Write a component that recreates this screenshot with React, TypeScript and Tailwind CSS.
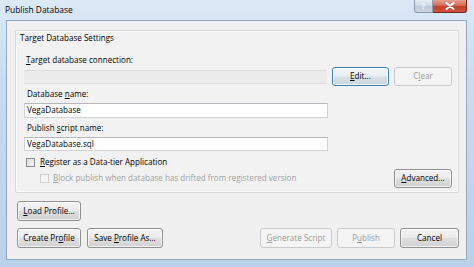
import React from "react";

const btn =
  "flex items-center justify-center h-full rounded-[3px] border border-[#8f9090] bg-[linear-gradient(#f3f3f3,#ebebeb_48%,#dedede_52%,#d2d2d2)] text-[#000] shadow-[inset_0_0_0_1px_rgba(255,255,255,0.7)]";
const btnDisabled =
  "flex items-center justify-center h-full rounded-[3px] border border-[#c9cbcd] bg-[#f4f4f4] text-[#9c9c9c]";

function U({ children }: { children: React.ReactNode }) {
  return <span className="underline underline-offset-[1px] decoration-[0.6px]">{children}</span>;
}

export default function App() {
  return (
    <div
      className="w-[474px] h-[267px] flex flex-col bg-[linear-gradient(180deg,#dce9f6_0%,#c9dcef_30%,#bad1ea_100%)] overflow-hidden"
      style={{ fontFamily: '"Open Sans", "Noto Sans", sans-serif' }}
    >
      {/* Title bar */}
      <div className="h-[20px] flex items-start justify-between shrink-0">
        <div className="h-full flex items-center pl-[5px] text-[8.4px] text-[#000] leading-none">
          Publish Database
        </div>
        <div className="flex items-start pr-[7px]">
          <div className="w-[19px] h-[13px] rounded-bl-[3px] border border-t-0 border-[#8d9cb0] bg-[linear-gradient(#e6edf5,#cdd8e4_50%,#bfcbd9_51%,#cad5e1)] flex items-center justify-center text-[8px] text-[#f4f7fb] font-bold leading-none">
            ?
          </div>
          <div className="w-[34px] h-[13px] rounded-br-[3px] border border-t-0 border-l-0 border-[#6e2a26] bg-[linear-gradient(#e7a08f,#d56b55_45%,#c0402a_55%,#d2533d)] flex items-center justify-center">
            <svg width="10" height="8" viewBox="0 0 10 8">
              <path d="M1.5 1 L8.5 7 M8.5 1 L1.5 7" stroke="#fff" strokeWidth="2" strokeLinecap="round" />
            </svg>
          </div>
        </div>
      </div>

      {/* Client area */}
      <div className="ml-[6px] mr-[7px] h-[240px] shrink-0 border border-[#93a7bf] bg-[#f0f0f0] flex flex-col text-[8.1px] leading-none text-[#000]">
        {/* Group box */}
        <div className="ml-[8px] mt-[9px] w-[444px] h-[163px] border border-[#d6dadd] rounded-[2px] bg-[#f2f2f2] shadow-[inset_0_0_0_1px_#fafafa] flex flex-col">
          <div className="mt-[2px] h-[10px] pl-[4px] flex items-center">Target Database Settings</div>
          <div className="mt-[12px] h-[10px] pl-[10px] flex items-center">
            <span><U>T</U>arget database connection:</span>
          </div>
          <div className="mt-[2px] h-[19px] flex items-center">
            <div className="ml-[8px] w-[303px] h-[14px] border-t border-b border-[#dcdcdc] bg-[#ececec]" />
            <div className="ml-[5px] w-[57px] h-[19px]">
              <div className="flex items-center justify-center h-full rounded-[3px] border border-[#3c7fb1] bg-[linear-gradient(#f3f6f8,#e8eef2_48%,#d9e1e7_52%,#cdd6dd)] text-[#000] shadow-[inset_0_0_0_1px_rgba(255,255,255,0.8)]">
                <span><U>E</U>dit...</span>
              </div>
            </div>
            <div className="ml-[5px] w-[58px] h-[19px]">
              <div className={btnDisabled}>
                <span>C<U>l</U>ear</span>
              </div>
            </div>
          </div>
          <div className="mt-[3px] h-[10px] pl-[11px] flex items-center">
            <span>Database <U>n</U>ame:</span>
          </div>
          <div className="mt-[4px] ml-[8px] w-[304px] h-[15px] border border-[#cfd3d8] border-t-[#b5b9be] bg-white flex items-center pl-[2px]">
            VegaDatabase
          </div>
          <div className="mt-[5px] h-[10px] pl-[11px] flex items-center">
            <span>Publish <U>s</U>cript name:</span>
          </div>
          <div className="mt-[4px] ml-[8px] w-[304px] h-[14px] border border-[#cfd3d8] border-t-[#b5b9be] bg-white flex items-center pl-[2px]">
            VegaDatabase.sql
          </div>
          <div className="mt-[7px] h-[9px] flex items-center">
            <div className="ml-[10px] w-[9px] h-[9px] border border-[#8f8f8f] bg-[linear-gradient(135deg,#d8d8d8,#f6f6f6)]" />
            <span className="ml-[5px]"><U>R</U>egister as a Data-tier Application</span>
          </div>
          <div className="mt-[2px] h-[19px] flex items-center">
            <div className="ml-[24px] w-[9px] h-[9px] border border-[#cfcfcf] bg-[#f5f5f5]" />
            <span className="ml-[4px] text-[#a2a2a2]"><U>B</U>lock publish when database has drifted from registered version</span>
            <div className="ml-auto mr-[6px] w-[58px] h-[19px]">
              <div className={btn}>
                <span><U>A</U>dvanced...</span>
              </div>
            </div>
          </div>
        </div>

        {/* Load profile */}
        <div className="mt-[8px] ml-[10px] w-[64px] h-[20px]">
          <div className={btn}>
            <span><U>L</U>oad Profile...</span>
          </div>
        </div>

        {/* Bottom row */}
        <div className="mt-[7px] h-[20px] flex">
          <div className="ml-[10px] w-[64px] h-full">
            <div className={btn}>
              <span>Create Pr<U>o</U>file</span>
            </div>
          </div>
          <div className="ml-[6px] w-[76px] h-full">
            <div className={btn}>
              <span>Save <U>P</U>rofile As...</span>
            </div>
          </div>
          <div className="ml-auto w-[72px] h-full">
            <div className={btnDisabled}>
              <span><U>G</U>enerate Script</span>
            </div>
          </div>
          <div className="ml-[5px] w-[58px] h-full">
            <div className={btnDisabled}>
              <span>P<U>u</U>blish</span>
            </div>
          </div>
          <div className="ml-[5px] mr-[7px] w-[59px] h-full">
            <div className={btn}>
              <span>Cancel</span>
            </div>
          </div>
        </div>
      </div>
    </div>
  );
}
